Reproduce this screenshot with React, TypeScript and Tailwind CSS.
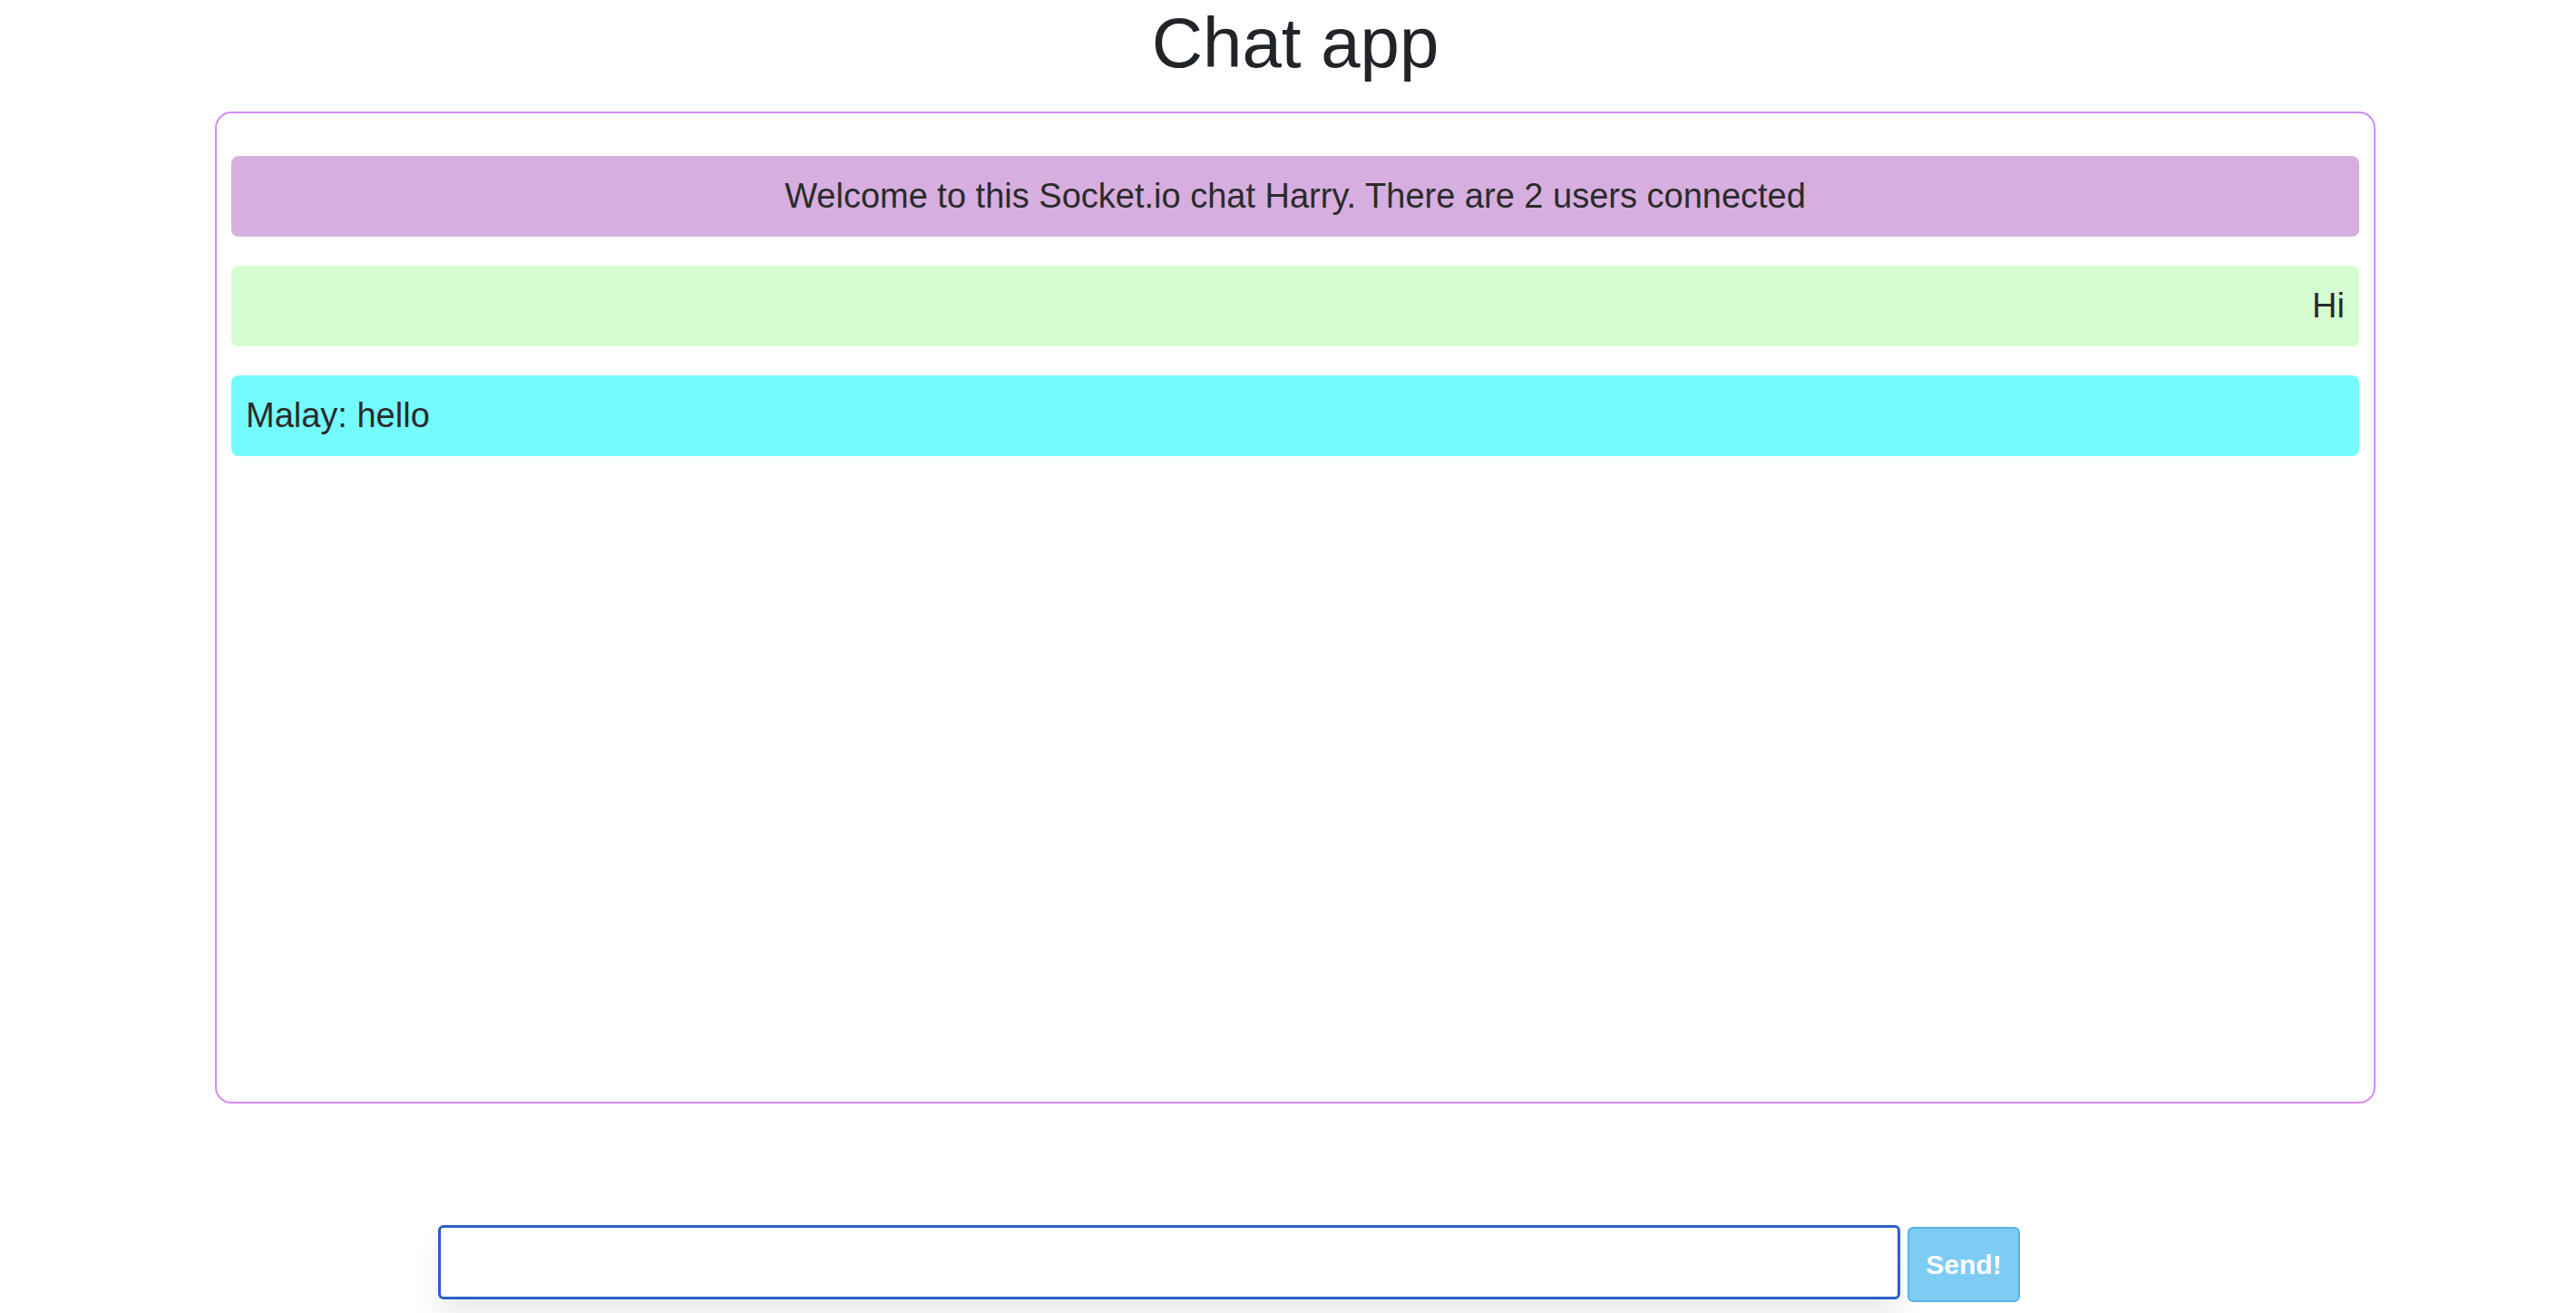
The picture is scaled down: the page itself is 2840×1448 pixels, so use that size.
export default function App() {
  return (
    <div className="w-[2840px] h-[1448px] bg-white overflow-hidden flex flex-col items-center pl-[16px]" style={{ fontFamily: '"Liberation Sans", Arial, sans-serif' }}>
      <h1 className="text-[78px] leading-none text-[#212529] mt-[8px] h-[115px]">Chat app</h1>
      <div className="w-[2382px] h-[1094px] border-2 border-[#d68cf5] rounded-[18px] px-[16px] pt-[47px] flex flex-col gap-[32px] text-[38px] text-[#2b2b2b]">
        <div className="h-[89px] rounded-[8px] bg-[#d6afe0] flex items-center justify-center">Welcome to this Socket.io chat Harry. There are 2 users connected</div>
        <div className="h-[89px] rounded-[8px] bg-[#d6fcd1] flex items-center justify-end px-[16px]">Hi</div>
        <div className="h-[89px] rounded-[8px] bg-[#74fcfc] flex items-center px-[16px]">Malay: hello</div>
      </div>
      <div className="mt-[134px] flex items-start gap-[8px] ml-[-146px]">
        <input className="w-[1612px] h-[82px] border-[3px] border-[#2a5fc8] rounded-[6px] shadow-[0_20px_30px_rgba(0,0,0,0.08)] outline-none px-3 text-[34px]" />
        <button className="mt-[2px] w-[124px] h-[83px] bg-[#7ecbf4] border-2 border-[#5ab4f0] rounded-[6px] text-white font-bold text-[30px]">Send!</button>
      </div>
    </div>
  );
}
